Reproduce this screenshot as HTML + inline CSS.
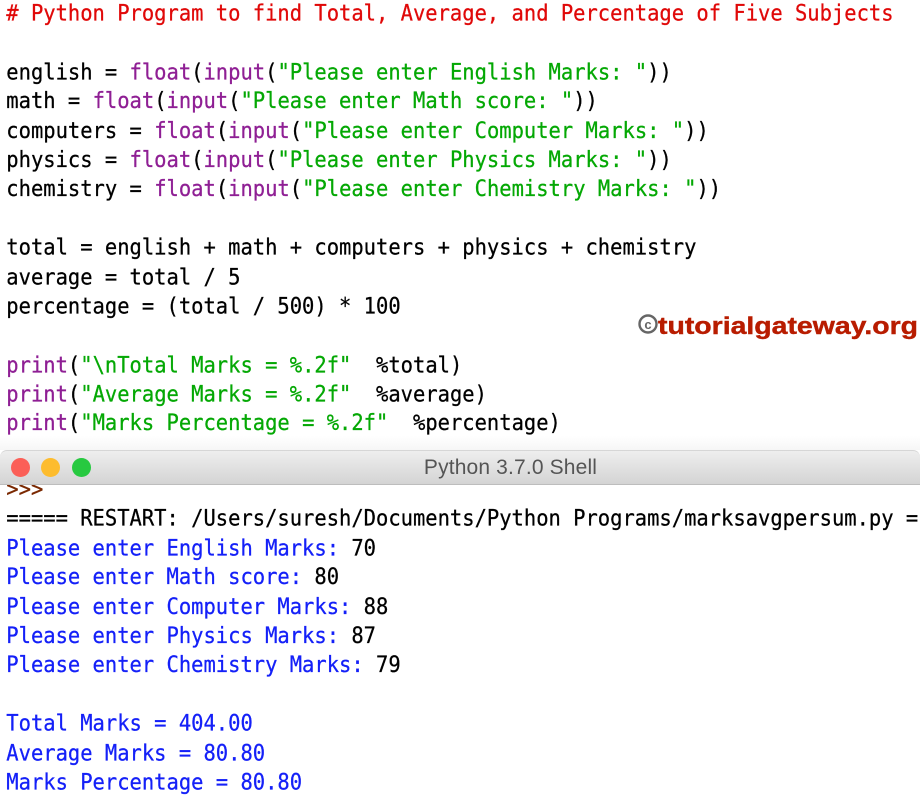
<!DOCTYPE html>
<html><head><meta charset="utf-8">
<style>
html,body{margin:0;padding:0;background:#fff;}
#w{position:relative;width:920px;height:800px;overflow:hidden;background:#fff;}
pre{margin:0;position:absolute;left:6.3px;font-family:"DejaVu Sans Mono","Liberation Mono",monospace;font-size:20.48px;line-height:27.383px;color:#000;white-space:pre;transform:scaleY(1.07);transform-origin:0 0;-webkit-text-stroke:.25px currentColor;}
.c{color:#e00808}.k{color:#8f1f94}.s{color:#04a804}.b{color:#1420f8}.p{color:#7a2800}
#bar{position:absolute;left:0;top:450px;width:920px;height:35px;box-sizing:border-box;border-top:1px solid #d6d6d6;border-bottom:1px solid #bdbdbd;border-radius:7px 7px 0 0;background:linear-gradient(#eeeeee,#d4d4d4);}
#gap{position:absolute;left:0;top:436px;width:920px;height:14px;background:linear-gradient(#fff,#f6f6f6);}
.d{position:absolute;top:458px;width:19px;height:19px;border-radius:50%;}
#t{position:absolute;left:0;top:456px;width:1021px;text-align:center;font:21px/24px "Liberation Sans",sans-serif;color:#555;letter-spacing:.15px;}
#clip{position:absolute;left:0;top:485px;width:920px;height:315px;overflow:hidden;}
svg{position:absolute;left:0;top:0;}
</style></head><body><div id="w">
<pre style="top:-1.5px"><span class="c"># Python Program to find Total, Average, and Percentage of Five Subjects</span>

english = <span class="k">float</span>(<span class="k">input</span>(<span class="s">"Please enter English Marks: "</span>))
math = <span class="k">float</span>(<span class="k">input</span>(<span class="s">"Please enter Math score: "</span>))
computers = <span class="k">float</span>(<span class="k">input</span>(<span class="s">"Please enter Computer Marks: "</span>))
physics = <span class="k">float</span>(<span class="k">input</span>(<span class="s">"Please enter Physics Marks: "</span>))
chemistry = <span class="k">float</span>(<span class="k">input</span>(<span class="s">"Please enter Chemistry Marks: "</span>))

total = english + math + computers + physics + chemistry
average = total / 5
percentage = (total / 500) * 100

<span class="k">print</span>(<span class="s">"\nTotal Marks = %.2f"</span>  %total)
<span class="k">print</span>(<span class="s">"Average Marks = %.2f"</span>  %average)
<span class="k">print</span>(<span class="s">"Marks Percentage = %.2f"</span>  %percentage)</pre>
<svg width="920" height="800"><circle cx="648" cy="324" r="8.5" fill="none" stroke="#666" stroke-width="2.4"/><text x="648" y="329" text-anchor="middle" font-family="Liberation Sans" font-weight="bold" font-size="13" fill="#666">c</text><text x="658" y="334" font-family="Liberation Sans" font-weight="bold" font-size="24" fill="#b81c00" stroke="#b81c00" stroke-width=".4" textLength="260" lengthAdjust="spacingAndGlyphs">tutorialgateway.org</text></svg>
<div id="gap"></div>
<div id="bar"></div>
<div class="d" style="left:10.5px;background:#fb5f57"></div>
<div class="d" style="left:41px;background:#fdbc2e"></div>
<div class="d" style="left:72px;background:#27c940"></div>
<div id="t">Python 3.7.0 Shell</div>
<div id="clip"><pre style="top:-10px"><span class="p">&gt;&gt;&gt;</span>
===== RESTART: /Users/suresh/Documents/Python Programs/marksavgpersum.py =
<span class="b">Please enter English Marks: </span>70
<span class="b">Please enter Math score: </span>80
<span class="b">Please enter Computer Marks: </span>88
<span class="b">Please enter Physics Marks: </span>87
<span class="b">Please enter Chemistry Marks: </span>79

<span class="b">Total Marks = 404.00</span>
<span class="b">Average Marks = 80.80</span>
<span class="b">Marks Percentage = 80.80</span></pre></div>
</div></body></html>
